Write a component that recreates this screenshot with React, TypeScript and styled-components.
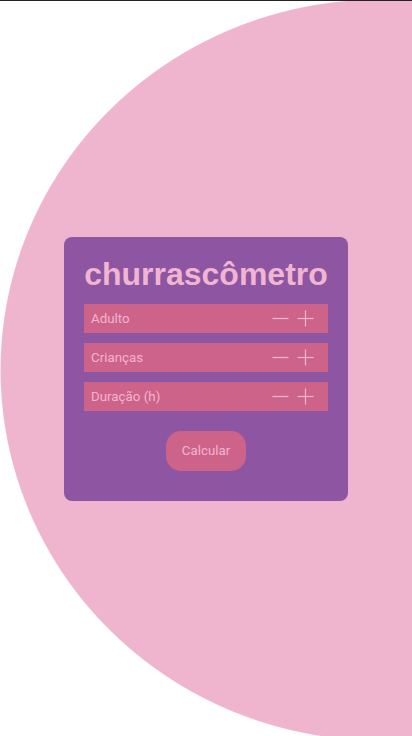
import React from "react";
import styled, { createGlobalStyle } from "styled-components";

const GlobalStyle = createGlobalStyle`
  html, body {
    margin: 0;
    padding: 0;
    background: #ffffff;
  }
  * {
    box-sizing: border-box;
  }
`;

const Page = styled.div`
  min-height: 100vh;
  display: flex;
  flex-direction: column;
  background: radial-gradient(
    380px 371px at 380px 370px,
    #efb5cf 99.7%,
    #ffffff 100%
  );
`;

const TopEdge = styled.div`
  height: 1px;
  background: #222222;
`;

const Stage = styled.main`
  flex: 1;
  display: flex;
  align-items: center;
  justify-content: center;
`;

const Card = styled.section`
  width: 284px;
  padding: 19px 20px 30px;
  background: #8e56a2;
  border-radius: 8px;
  display: flex;
  flex-direction: column;
  align-items: center;
`;

const Title = styled.h1`
  margin: 0 0 11px;
  font-family: "Liberation Sans", Arial, sans-serif;
  font-size: 32px;
  line-height: 37px;
  font-weight: 700;
  color: #f0b5d0;
`;

const Fields = styled.div`
  width: 100%;
  display: flex;
  flex-direction: column;
  gap: 10px;
`;

const Row = styled.div`
  height: 29px;
  padding: 0 14px 0 7px;
  background: #ce6389;
  display: flex;
  align-items: center;
  justify-content: space-between;
`;

const Label = styled.span`
  font-family: Roboto, "Noto Sans", sans-serif;
  font-size: 13.333px;
  color: #f0b5d0;
`;

const Steppers = styled.div`
  display: flex;
  align-items: center;
  gap: 8px;
`;

const StepButton = styled.button`
  width: 17px;
  height: 17px;
  padding: 0;
  border: 0;
  background: transparent;
  display: flex;
  cursor: pointer;
`;

const CalcButton = styled.button`
  margin-top: 20px;
  width: 80px;
  height: 40px;
  border: 0;
  border-radius: 15px;
  background: #ce6389;
  color: #f0b5d0;
  font-family: Roboto, "Noto Sans", sans-serif;
  font-size: 13.333px;
  cursor: pointer;
`;

const Minus = () => (
  <svg width="17" height="17" viewBox="0 0 17 17">
    <line x1="0.5" y1="8.5" x2="16.5" y2="8.5" stroke="#f0b5d0" strokeWidth="1.2" />
  </svg>
);

const Plus = () => (
  <svg width="17" height="17" viewBox="0 0 17 17">
    <line x1="0.5" y1="8.5" x2="16.5" y2="8.5" stroke="#f0b5d0" strokeWidth="1.2" />
    <line x1="8.5" y1="0.5" x2="8.5" y2="16.5" stroke="#f0b5d0" strokeWidth="1.2" />
  </svg>
);

const fields = ["Adulto", "Crianças", "Duração (h)"];

export default function App() {
  return (
    <>
      <GlobalStyle />
      <Page>
        <TopEdge />
        <Stage>
          <Card>
            <Title>churrascômetro</Title>
            <Fields>
              {fields.map((name) => (
                <Row key={name}>
                  <Label>{name}</Label>
                  <Steppers>
                    <StepButton aria-label="diminuir">
                      <Minus />
                    </StepButton>
                    <StepButton aria-label="aumentar">
                      <Plus />
                    </StepButton>
                  </Steppers>
                </Row>
              ))}
            </Fields>
            <CalcButton>Calcular</CalcButton>
          </Card>
        </Stage>
      </Page>
    </>
  );
}
